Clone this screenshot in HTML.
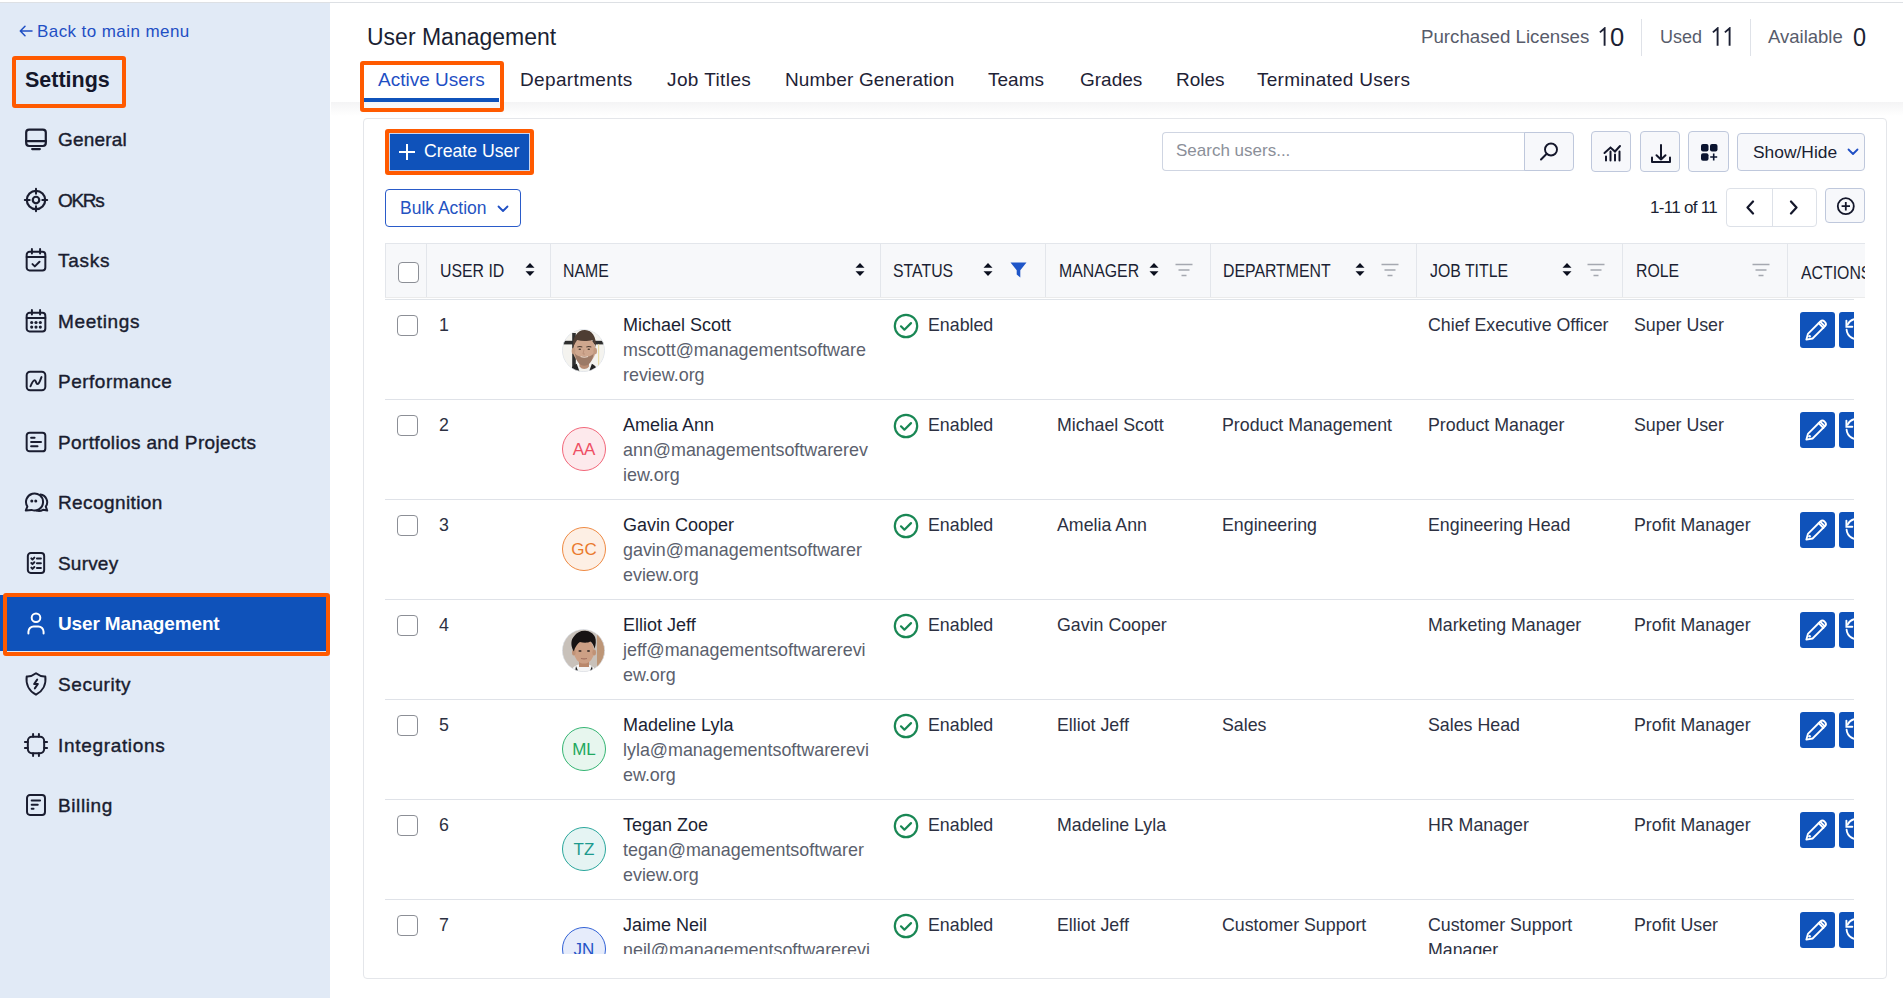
<!DOCTYPE html>
<html><head><meta charset="utf-8">
<style>
*{box-sizing:border-box;margin:0;padding:0}
html,body{width:1903px;height:998px;overflow:hidden;background:#fff;font-family:"Liberation Sans",sans-serif;color:#1b1f33}
.a{position:absolute;white-space:nowrap}
#topline{position:absolute;left:0;top:2px;width:1903px;height:1px;background:#dde0e4}
#side{position:absolute;left:0;top:3px;width:330px;height:995px;background:#e1eaf6}
.back{left:18px;top:20.5px;font-size:17px;color:#1f4fc4;letter-spacing:0.42px}
.back .arr{position:relative;top:2px;margin-right:3px}
.settings{left:25px;top:68px;font-size:21.5px;font-weight:700;color:#14172b}
.obox{position:absolute;border:4px solid #ff5a00;border-radius:3px}
.nav{position:absolute;left:0;width:326px;height:40px;color:#1a1d30}
.nav svg{position:absolute;left:22px;top:6px;fill:none;stroke:currentColor;stroke-width:1.7;stroke-linecap:round;stroke-linejoin:round}
.nav span{position:absolute;left:58px;top:10px;font-size:19px;-webkit-text-stroke:0.4px currentColor;white-space:nowrap}
.nav.sel{background:#0f52ba;color:#fff;height:56px;margin-top:-8px}
.nav.sel svg{top:14px}
.nav.sel span{font-weight:700;-webkit-text-stroke:0;top:18px}
.title{left:367px;top:24px;font-size:23px;color:#1b1f33}
.tab{top:69px;font-size:19px;color:#1e2236}
.lic{top:26px;font-size:18px;color:#585c6b}
.licn{top:23px;font-size:25.5px;color:#1b1f33}
.vdiv{position:absolute;width:1px;background:#dfe2e8}
#hshadow{position:absolute;left:331px;top:102px;width:1572px;height:14px;background:linear-gradient(#f4f4f5,#fff)}
#card{position:absolute;left:363px;top:118px;width:1524px;height:861px;border:1px solid #e4e6ea;border-radius:4px;background:#fff}
.ico{position:absolute}
.btnp{position:absolute;background:#0f52ba;color:#fff;border:1px solid #c9d6ef}
.btnp span,.btno span,.inp span,.gbtn span{position:absolute;white-space:nowrap;font-size:18px}
.btno{position:absolute;border:1px solid #2a5bc9;border-radius:4px;background:#fff;color:#2553c2}
.btno span{font-size:17.5px}
.inp{position:absolute;border:1px solid #cfd5e2;border-right:none;border-radius:4px 0 0 4px;background:#fff;color:#8b8f99}
.inp span{font-size:17px}
.gbtn{position:absolute;background:#f7f8fb;border:1px solid #bfc8dc;border-radius:4px}
.gbtn span{font-size:17.4px}
.wbtn{position:absolute;background:#fff;border:1px solid #dde1e8;border-radius:4px}
.pgtxt{font-size:17px;letter-spacing:-0.7px;color:#1b1f33}
#thead{position:absolute;left:385px;top:243px;width:1480px;height:55px;background:#f7f8fa;border-top:1px solid #e3e6eb;border-left:1px solid #e3e6eb;border-bottom:1px solid #ebebeb}
.hdiv{position:absolute;top:244px;width:1px;height:53px;background:#e3e6eb}
.cb{position:absolute;width:21px;height:21px;border:1.3px solid #8c8f96;border-radius:4px;background:#fff}
.th{top:261px;font-size:18px;transform:scaleX(0.88);transform-origin:0 0;color:#1b1f33}
#actclip{position:absolute;left:1787px;top:244px;width:78px;height:53px;overflow:hidden}
#tbody{position:absolute;left:385px;top:243px;width:1469px;height:711px;overflow:hidden}
.rline{position:absolute;left:0;width:1469px;height:1px;background:#dfe2e8}
.td{font-size:17.8px;color:#2d3142;line-height:25px}
.nm{color:#1b1f33;font-size:18px}
.em{color:#5b5f6d;line-height:25px;font-size:17.9px}
.av{position:absolute;width:43px;height:43px;border-radius:50%;border:1px solid;font-size:17px;text-align:center;line-height:41px;overflow:hidden}
.ebtn{position:absolute;width:35px;height:36px;background:#0f52ba;border-radius:3px}

</style></head>
<body>
<div id="side"></div>
<div class="a back"><svg class="arr" width="16" height="16" viewBox="0 0 16 16"><path d="M14 8H2.5M7 3.2L2.3 8L7 12.8" fill="none" stroke="#1f4fc4" stroke-width="1.5" stroke-linecap="round" stroke-linejoin="round"/></svg>Back to main menu</div>
<div class="a settings">Settings</div>
<div class="obox" style="left:12px;top:56px;width:114px;height:52px"></div>
<div class="nav" style="top:119.0px"><svg width="28" height="28" viewBox="0 0 24 24"><rect x="3.6" y="4" width="16.8" height="14" rx="2.5" stroke-width="1.9"/><path d="M3.6 13.8h16.8M8.7 20.6h6.6" stroke-width="1.9"/></svg><span style="letter-spacing:0.17px">General</span></div>
<div class="nav" style="top:179.6px"><svg width="28" height="28" viewBox="0 0 24 24"><circle cx="12" cy="12" r="7.9" stroke-width="1.9"/><circle cx="12" cy="12" r="2.8" stroke-width="1.9"/><path d="M12 2.4v4.2M12 17.4v4.2M2.4 12h4.2M17.4 12h4.2"/></svg><span style="letter-spacing:-1.3px">OKRs</span></div>
<div class="nav" style="top:240.1px"><svg width="28" height="28" viewBox="0 0 24 24"><rect x="4" y="5" width="16" height="16" rx="2.5"/><path d="M8.5 2.5v4M15.5 2.5v4M4 9.5h16M9 15.5l2 2l4-4"/></svg><span style="letter-spacing:0.75px">Tasks</span></div>
<div class="nav" style="top:300.6px"><svg width="28" height="28" viewBox="0 0 24 24"><rect x="4" y="5" width="16" height="16" rx="2.5"/><path d="M8.5 2.5v4M15.5 2.5v4M4 9.5h16"/><g fill="currentColor" stroke="none"><circle cx="8.3" cy="13.3" r="1.35"/><circle cx="12" cy="13.3" r="1.35"/><circle cx="15.7" cy="13.3" r="1.35"/><circle cx="8.3" cy="17.2" r="1.35"/><circle cx="12" cy="17.2" r="1.35"/><circle cx="15.7" cy="17.2" r="1.35"/></g></svg><span style="letter-spacing:0.63px">Meetings</span></div>
<div class="nav" style="top:361.2px"><svg width="28" height="28" viewBox="0 0 24 24"><rect x="4" y="4" width="16" height="16" rx="3"/><path d="M7.3 16.5c1-2.5 2.2-5.3 3.6-5.2c1.3.1 1 3.3 2.4 3.3c1.5 0 2.5-4 3.4-6"/></svg><span style="letter-spacing:0.5px">Performance</span></div>
<div class="nav" style="top:421.8px"><svg width="28" height="28" viewBox="0 0 24 24"><rect x="4" y="4" width="16" height="16" rx="2.5"/><path d="M7.8 8.3h3M7.8 12h8.5M7.8 15.7h5.5"/></svg><span style="letter-spacing:0.36px">Portfolios and Projects</span></div>
<div class="nav" style="top:482.3px"><svg width="28" height="28" viewBox="0 0 24 24"><path d="M3.2 19.3l1.4-3.4a7.3 7.3 0 1 1 3.6 2.9z"/><path d="M15.8 5.6a6.6 6.6 0 0 1 4.6 10.3l1.2 3.4l-3.6-.6a6.6 6.6 0 0 1-5.4 .7"/><g fill="currentColor" stroke="none"><circle cx="8.4" cy="11.2" r="1.3"/><circle cx="11.8" cy="11.2" r="1.3"/></g></svg><span style="letter-spacing:0.4px">Recognition</span></div>
<div class="nav" style="top:542.8px"><svg width="28" height="28" viewBox="0 0 24 24"><rect x="5" y="3.5" width="14" height="17" rx="2.5"/><path d="M8 8l1 1l1.6-1.6M8 12l1 1l1.6-1.6M8 16l1 1l1.6-1.6M12.8 8.2h3.4M12.8 12.2h3.4M12.8 16.2h3.4"/></svg><span style="letter-spacing:0.2px">Survey</span></div>
<div class="nav sel" style="top:603.4px"><svg width="28" height="28" viewBox="0 0 24 24"><circle cx="12" cy="7.5" r="3.7"/><path d="M5.5 21v-1.5a4.5 4.5 0 0 1 4.5-4.5h4a4.5 4.5 0 0 1 4.5 4.5V21"/></svg><span style="letter-spacing:-0.14px">User Management</span></div>
<div class="nav" style="top:663.9px"><svg width="28" height="28" viewBox="0 0 24 24"><path d="M12 2.8c2.6 2 5.4 3 8 2.8c.9 6.7-2.3 12.5-8 15.6C6.3 18.1 3.1 12.3 4 5.6c2.6.2 5.4-.8 8-2.8z"/><path d="M13 8.2l-2.6 3.8h3.2l-2.6 3.8"/></svg><span style="letter-spacing:0.57px">Security</span></div>
<div class="nav" style="top:724.5px"><svg width="28" height="28" viewBox="0 0 24 24"><rect x="5" y="5" width="14" height="14" rx="3.5"/><path d="M2.5 9.5h2.5M2.5 14.5h2.5M19 9.5h2.5M19 14.5h2.5M9.5 2.5v2.5M14.5 2.5v2.5M9.5 19v2.5M14.5 19v2.5"/></svg><span style="letter-spacing:0.68px">Integrations</span></div>
<div class="nav" style="top:785.0px"><svg width="28" height="28" viewBox="0 0 24 24"><rect x="4.3" y="3.5" width="15.4" height="17" rx="2.5"/><path d="M8.3 8.2h7.2M8.3 11.8h5.2M8.3 15.3h1.6"/></svg><span style="letter-spacing:0.6px">Billing</span></div>
<div class="obox" style="left:3px;top:593px;width:327px;height:63px"></div>
<div id="topline"></div>
<div class="a title">User Management</div>
<div class="a tab" style="left:378px;letter-spacing:0px;color:#1f4fc4">Active Users</div>
<div class="a tab" style="left:520px;letter-spacing:0.35px">Departments</div>
<div class="a tab" style="left:667px;letter-spacing:0.4px">Job Titles</div>
<div class="a tab" style="left:785px;letter-spacing:0.15px">Number Generation</div>
<div class="a tab" style="left:988px;letter-spacing:0px">Teams</div>
<div class="a tab" style="left:1080px;letter-spacing:0px">Grades</div>
<div class="a tab" style="left:1176px;letter-spacing:0px">Roles</div>
<div class="a tab" style="left:1257px;letter-spacing:0.27px">Terminated Users</div>
<div id="hshadow"></div>
<div style="position:absolute;left:364px;top:98px;width:135px;height:4px;background:#0f52ba"></div>
<div class="obox" style="left:360px;top:61px;width:144px;height:51px"></div>
<div class="a lic" style="left:1421px;font-size:18.7px">Purchased Licenses</div>
<svg class="ico" style="left:1599px;top:27px" width="9" height="20" viewBox="0 0 9 20"><path d="M0.9 5.4L5.6 1.3V18.7" stroke="#1b1f33" stroke-width="1.9" fill="none"/></svg>
<div class="a licn" style="left:1610px;font-size:25.5px">0</div>
<div class="vdiv" style="left:1641px;top:19px;height:37px"></div>
<div class="a lic" style="left:1660px;top:27px">Used</div>
<svg class="ico" style="left:1711.5px;top:27px" width="9" height="20" viewBox="0 0 9 20"><path d="M0.9 5.4L5.6 1.3V18.7" stroke="#1b1f33" stroke-width="1.9" fill="none"/></svg><svg class="ico" style="left:1723.5px;top:27px" width="9" height="20" viewBox="0 0 9 20"><path d="M0.9 5.4L5.6 1.3V18.7" stroke="#1b1f33" stroke-width="1.9" fill="none"/></svg>
<div class="vdiv" style="left:1750px;top:19px;height:37px"></div>
<div class="a lic" style="left:1768px;font-size:18.5px;top:25.5px">Available</div>
<div class="a licn" style="left:1853px;transform:scaleX(0.92);transform-origin:0 0">0</div>
<div id="card"></div>
<div class="btnp" style="left:389px;top:133px;width:141px;height:38px"><svg class="ico" style="left:7px;top:8px" width="20" height="20" viewBox="0 0 20 20"><path d="M10 2v16M2 10h16" stroke="#fff" stroke-width="2" fill="none"/></svg><span style="left:34px;top:7px;font-size:17.7px">Create User</span></div>
<div class="obox" style="left:385px;top:129px;width:149px;height:46px"></div>
<div class="btno" style="left:385px;top:189px;width:136px;height:38px"><span style="left:14px;top:8px">Bulk Action</span><svg class="ico" style="left:110px;top:13px" width="14" height="12" viewBox="0 0 14 12"><path d="M2.5 3.5l4.5 4.5l4.5-4.5" stroke="#1f4fc4" stroke-width="1.8" fill="none" stroke-linecap="round" stroke-linejoin="round"/></svg></div>
<div class="inp" style="left:1162px;top:132px;width:363px;height:39px"><span style="left:13px;top:8px">Search users...</span></div>
<div class="gbtn" style="left:1524px;top:132px;width:50px;height:39px;border-radius:0 4px 4px 0"><svg class="ico" style="left:12px;top:7px" width="24" height="24" viewBox="0 0 24 24"><circle cx="14" cy="9.5" r="6" stroke="#14172b" stroke-width="1.9" fill="none"/><path d="M9.7 13.8L4 19.5" stroke="#14172b" stroke-width="2" stroke-linecap="round"/></svg></div>
<div class="gbtn" style="left:1591px;top:131px;width:40px;height:41px"><svg class="ico" style="left:0;top:0" width="40" height="41" viewBox="0 0 40 41"><g stroke="#14172b" stroke-width="2" stroke-linecap="round" fill="none"><path d="M14 28.5v-4M18.5 28.5v-9M23 28.5v-6M27.5 28.5v-9"/><path d="M12.5 21l6-5.5l4.5 4l5-5.5"/></g></svg></div>
<div class="gbtn" style="left:1640px;top:131px;width:40px;height:41px"><svg class="ico" style="left:0;top:0" width="40" height="41" viewBox="0 0 40 41"><g stroke="#14172b" stroke-width="2" stroke-linecap="round" stroke-linejoin="round" fill="none"><path d="M20 13v14.5M15.5 23.2L20 27.5l4.5-4.3M11 25.5v4.5h18v-4.5"/></g></svg></div>
<div class="gbtn" style="left:1688px;top:131px;width:41px;height:41px"><svg class="ico" style="left:-1px;top:-1px" width="41" height="41" viewBox="0 0 41 41"><g fill="#0b1430"><rect x="13" y="13" width="7.5" height="7.5" rx="2"/><rect x="22" y="13" width="7.5" height="7.5" rx="2"/><rect x="13" y="22.3" width="7.5" height="7.5" rx="2"/></g><path d="M25.7 22.5v7M22.2 26h7" stroke="#0b1430" stroke-width="1.6"/></svg></div>
<div class="gbtn" style="left:1737px;top:133px;width:128px;height:38px"><span style="left:15px;top:7.5px;color:#1b1f33">Show/Hide</span><svg class="ico" style="left:108px;top:12px" width="14" height="12" viewBox="0 0 14 12"><path d="M2.5 3.5l4.5 4.5l4.5-4.5" stroke="#1f4fc4" stroke-width="1.8" fill="none" stroke-linecap="round" stroke-linejoin="round"/></svg></div>
<div class="a pgtxt" style="left:1650px;top:198px">1-11 of 11</div>
<div class="wbtn" style="left:1726px;top:188px;width:91px;height:39px"><div style="position:absolute;left:45px;top:0;width:1px;height:37px;background:#dde1e8"></div><svg class="ico" style="left:0;top:0" width="91" height="39" viewBox="0 0 91 39"><g stroke="#14172b" stroke-width="2.2" stroke-linecap="round" stroke-linejoin="round" fill="none"><path d="M26 12.5l-5.5 6l5.5 6M64 12.5l5.5 6l-5.5 6"/></g></svg></div>
<div class="gbtn" style="left:1825px;top:188px;width:40px;height:35px"><svg class="ico" style="left:0;top:0" width="40" height="35" viewBox="0 0 40 35"><circle cx="19.8" cy="17.2" r="8" stroke="#14172b" stroke-width="1.8" fill="none"/><path d="M19.8 13v8.4M15.6 17.2h8.4" stroke="#14172b" stroke-width="1.8"/></svg></div>
<div id="thead"></div>
<div style="position:absolute;left:385px;top:299px;width:1469px;height:1px;background:#e0e4e9"></div>
<div class="hdiv" style="left:426px"></div>
<div class="hdiv" style="left:550px"></div>
<div class="hdiv" style="left:880px"></div>
<div class="hdiv" style="left:1045px"></div>
<div class="hdiv" style="left:1210px"></div>
<div class="hdiv" style="left:1416px"></div>
<div class="hdiv" style="left:1622px"></div>
<div class="hdiv" style="left:1787px"></div>
<div class="cb" style="left:398px;top:262px"></div>
<div class="a th" style="left:440px">USER ID</div>
<div class="a th" style="left:563px">NAME</div>
<div class="a th" style="left:893px">STATUS</div>
<div class="a th" style="left:1059px">MANAGER</div>
<div class="a th" style="left:1223px">DEPARTMENT</div>
<div class="a th" style="left:1430px">JOB TITLE</div>
<div class="a th" style="left:1636px">ROLE</div>
<div id="actclip"><div class="a th" style="left:14px;top:19px">ACTIONS</div></div>
<svg class="ico" style="left:524.5px;top:262px" width="10" height="15" viewBox="0 0 10 15"><path d="M5 1L9.5 5.8H0.5z M5 14L0.5 9.2H9.5z" fill="#0b0f1e"/></svg>
<svg class="ico" style="left:854.5px;top:262px" width="10" height="15" viewBox="0 0 10 15"><path d="M5 1L9.5 5.8H0.5z M5 14L0.5 9.2H9.5z" fill="#0b0f1e"/></svg>
<svg class="ico" style="left:983px;top:262px" width="10" height="15" viewBox="0 0 10 15"><path d="M5 1L9.5 5.8H0.5z M5 14L0.5 9.2H9.5z" fill="#0b0f1e"/></svg>
<svg class="ico" style="left:1148.5px;top:262px" width="10" height="15" viewBox="0 0 10 15"><path d="M5 1L9.5 5.8H0.5z M5 14L0.5 9.2H9.5z" fill="#0b0f1e"/></svg>
<svg class="ico" style="left:1355px;top:262px" width="10" height="15" viewBox="0 0 10 15"><path d="M5 1L9.5 5.8H0.5z M5 14L0.5 9.2H9.5z" fill="#0b0f1e"/></svg>
<svg class="ico" style="left:1562px;top:262px" width="10" height="15" viewBox="0 0 10 15"><path d="M5 1L9.5 5.8H0.5z M5 14L0.5 9.2H9.5z" fill="#0b0f1e"/></svg>
<svg class="ico" style="left:1010px;top:262px" width="17" height="16" viewBox="0 0 17 16"><path d="M0.5 0.5h16L10.3 8.3V15.5L6.7 12.5V8.3z" fill="#1f56c8"/></svg>
<svg class="ico" style="left:1175px;top:263px" width="18" height="14" viewBox="0 0 18 14"><path d="M0.5 1.5h17M3.5 7h11M6.5 12.5h5" stroke="#a5a8b0" stroke-width="1.6"/></svg>
<svg class="ico" style="left:1381px;top:263px" width="18" height="14" viewBox="0 0 18 14"><path d="M0.5 1.5h17M3.5 7h11M6.5 12.5h5" stroke="#a5a8b0" stroke-width="1.6"/></svg>
<svg class="ico" style="left:1587px;top:263px" width="18" height="14" viewBox="0 0 18 14"><path d="M0.5 1.5h17M3.5 7h11M6.5 12.5h5" stroke="#a5a8b0" stroke-width="1.6"/></svg>
<svg class="ico" style="left:1752px;top:263px" width="18" height="14" viewBox="0 0 18 14"><path d="M0.5 1.5h17M3.5 7h11M6.5 12.5h5" stroke="#a5a8b0" stroke-width="1.6"/></svg>
<div id="tbody">
<div class="cb" style="left:12px;top:72px"></div>
<div class="a td" style="left:54px;top:70px">1</div>
<div class="av" style="left:177px;top:86px;border:none"><svg width="43" height="43" viewBox="0 0 43 43"><defs><clipPath id="c1"><circle cx="21.5" cy="21.5" r="21.3"/></clipPath></defs><g clip-path="url(#c1)"><rect width="43" height="43" fill="#f4f3ef"/><rect x="0" y="11.8" width="43" height="3.6" fill="#2e2e2e"/><rect x="10.2" y="4" width="3.6" height="39" fill="#2e2e2e"/><rect x="36" y="15.4" width="1.2" height="28" fill="#e9dca6"/><path d="M12 43c1.5-5 4.5-7.5 10-7.5s8.8 2.5 10 7.5z" fill="#f2f2ef"/><path d="M8.5 43c.8-4.5 2.8-7 6.2-8.2l3 8.2zM35.5 43c-.7-4.5-2.6-7-5.6-8.2l-3 8.2z" fill="#242424"/><path d="M17.5 31h9.5v6.5c-1.5 1.8-3 2.5-4.8 2.5s-3.3-.8-4.7-2.5z" fill="#b98d74"/><ellipse cx="22.3" cy="21.2" rx="11.3" ry="13" fill="#cfa78e"/><ellipse cx="11.5" cy="22" rx="1.8" ry="3.2" fill="#c39a80"/><ellipse cx="33.2" cy="22" rx="1.8" ry="3.2" fill="#c39a80"/><path d="M11 19.5c-1.2-11 4.6-18.5 11.5-18.5c7.2 0 12.2 6 11.4 17.5c-.9-3.6-2.2-6.2-3.8-7.6c-3.8 1.3-10 1.4-14.8.2c-1.8 1.6-3.2 4.4-4.3 8.4z" fill="#4e3d33"/><path d="M12.8 24c1.2 8.3 4.8 12.8 9.5 12.8s8.3-4.5 9.5-12.8c-1.6 2.6-3.6 3.6-9.5 3.6s-7.9-1-9.5-3.6z" fill="#9c7a66"/><path d="M18.6 27.6q3.7 1.4 7.4 0" stroke="#e9d6c8" stroke-width="1.1" fill="none"/><g fill="#4a3a30"><path d="M15.3 17.6q2.5-1.2 5 0v.8q-2.5-.8-5 0z"/><path d="M24.3 17.6q2.5-1.2 5 0v.8q-2.5-.8-5 0z"/><ellipse cx="17.8" cy="20.3" rx="1.3" ry="0.8"/><ellipse cx="26.8" cy="20.3" rx="1.3" ry="0.8"/></g><path d="M22 20.5l-1 4.5h2" stroke="#b58c74" stroke-width="0.8" fill="none"/></g><circle cx="21.5" cy="21.5" r="21.2" fill="none" stroke="#dfe3ea" stroke-width="0.9"/></svg></div>
<div class="a td" style="left:238px;top:70px"><span class="nm">Michael Scott</span><br><span class="em">mscott@managementsoftware<br>review.org</span></div>
<div class="ico" style="left:508px;top:70px"><svg width="26" height="26" viewBox="0 0 26 26"><circle cx="13" cy="13" r="11.2" stroke="#198754" stroke-width="2.2" fill="none"/><path d="M8 13.3l3.4 3.4l6.6-6.6" stroke="#198754" stroke-width="2.2" fill="none" stroke-linecap="round" stroke-linejoin="round"/></svg></div>
<div class="a td" style="left:543px;top:70px">Enabled</div>
<div class="a td" style="left:1043px;top:70px">Chief Executive Officer</div>
<div class="a td" style="left:1249px;top:70px">Super User</div>
<div class="ebtn" style="left:1415px;top:69px"><svg width="35" height="36" viewBox="0 0 35 36"><g stroke="#fff" stroke-width="1.8" fill="none" stroke-linejoin="round" stroke-linecap="round"><path d="M6.3 27.7L7.9 21.9L20.3 9.5a2.9 2.9 0 0 1 4.1 0l.6 .6a2.9 2.9 0 0 1 0 4.1L12.6 26.5z"/><path d="M18.6 11.2l4.8 4.8M20.4 9.9l4.3 4.3"/></g><circle cx="9.6" cy="24.2" r="1.3" fill="#fff"/></svg></div>
<div class="ebtn" style="left:1454px;top:69px;width:15px;border-radius:3px 0 0 3px;overflow:hidden"><svg width="35" height="36" viewBox="0 0 35 36" style="position:absolute;left:0;top:0"><g stroke="#fff" stroke-width="1.9" fill="none" stroke-linecap="round"><path d="M7.6 17.8A10 10 0 1 0 8.6 12.6"/><path d="M7.4 8.6v6.2h5.9"/></g></svg></div>
<div class="rline" style="top:156px"></div>
<div class="cb" style="left:12px;top:172px"></div>
<div class="a td" style="left:54px;top:170px">2</div>
<div class="av" style="left:177px;top:184px;width:44px;height:44px;line-height:44px;background:#fde9ec;border-color:#f2677a;color:#ee4d63">AA</div>
<div class="a td" style="left:238px;top:170px"><span class="nm">Amelia Ann</span><br><span class="em">ann@managementsoftwarerev<br>iew.org</span></div>
<div class="ico" style="left:508px;top:170px"><svg width="26" height="26" viewBox="0 0 26 26"><circle cx="13" cy="13" r="11.2" stroke="#198754" stroke-width="2.2" fill="none"/><path d="M8 13.3l3.4 3.4l6.6-6.6" stroke="#198754" stroke-width="2.2" fill="none" stroke-linecap="round" stroke-linejoin="round"/></svg></div>
<div class="a td" style="left:543px;top:170px">Enabled</div>
<div class="a td" style="left:672px;top:170px">Michael Scott</div>
<div class="a td" style="left:837px;top:170px">Product Management</div>
<div class="a td" style="left:1043px;top:170px">Product Manager</div>
<div class="a td" style="left:1249px;top:170px">Super User</div>
<div class="ebtn" style="left:1415px;top:169px"><svg width="35" height="36" viewBox="0 0 35 36"><g stroke="#fff" stroke-width="1.8" fill="none" stroke-linejoin="round" stroke-linecap="round"><path d="M6.3 27.7L7.9 21.9L20.3 9.5a2.9 2.9 0 0 1 4.1 0l.6 .6a2.9 2.9 0 0 1 0 4.1L12.6 26.5z"/><path d="M18.6 11.2l4.8 4.8M20.4 9.9l4.3 4.3"/></g><circle cx="9.6" cy="24.2" r="1.3" fill="#fff"/></svg></div>
<div class="ebtn" style="left:1454px;top:169px;width:15px;border-radius:3px 0 0 3px;overflow:hidden"><svg width="35" height="36" viewBox="0 0 35 36" style="position:absolute;left:0;top:0"><g stroke="#fff" stroke-width="1.9" fill="none" stroke-linecap="round"><path d="M7.6 17.8A10 10 0 1 0 8.6 12.6"/><path d="M7.4 8.6v6.2h5.9"/></g></svg></div>
<div class="rline" style="top:256px"></div>
<div class="cb" style="left:12px;top:272px"></div>
<div class="a td" style="left:54px;top:270px">3</div>
<div class="av" style="left:177px;top:284px;width:44px;height:44px;line-height:44px;background:#fdefe4;border-color:#ef8a43;color:#ea7a2c">GC</div>
<div class="a td" style="left:238px;top:270px"><span class="nm">Gavin Cooper</span><br><span class="em">gavin@managementsoftwarer<br>eview.org</span></div>
<div class="ico" style="left:508px;top:270px"><svg width="26" height="26" viewBox="0 0 26 26"><circle cx="13" cy="13" r="11.2" stroke="#198754" stroke-width="2.2" fill="none"/><path d="M8 13.3l3.4 3.4l6.6-6.6" stroke="#198754" stroke-width="2.2" fill="none" stroke-linecap="round" stroke-linejoin="round"/></svg></div>
<div class="a td" style="left:543px;top:270px">Enabled</div>
<div class="a td" style="left:672px;top:270px">Amelia Ann</div>
<div class="a td" style="left:837px;top:270px">Engineering</div>
<div class="a td" style="left:1043px;top:270px">Engineering Head</div>
<div class="a td" style="left:1249px;top:270px">Profit Manager</div>
<div class="ebtn" style="left:1415px;top:269px"><svg width="35" height="36" viewBox="0 0 35 36"><g stroke="#fff" stroke-width="1.8" fill="none" stroke-linejoin="round" stroke-linecap="round"><path d="M6.3 27.7L7.9 21.9L20.3 9.5a2.9 2.9 0 0 1 4.1 0l.6 .6a2.9 2.9 0 0 1 0 4.1L12.6 26.5z"/><path d="M18.6 11.2l4.8 4.8M20.4 9.9l4.3 4.3"/></g><circle cx="9.6" cy="24.2" r="1.3" fill="#fff"/></svg></div>
<div class="ebtn" style="left:1454px;top:269px;width:15px;border-radius:3px 0 0 3px;overflow:hidden"><svg width="35" height="36" viewBox="0 0 35 36" style="position:absolute;left:0;top:0"><g stroke="#fff" stroke-width="1.9" fill="none" stroke-linecap="round"><path d="M7.6 17.8A10 10 0 1 0 8.6 12.6"/><path d="M7.4 8.6v6.2h5.9"/></g></svg></div>
<div class="rline" style="top:356px"></div>
<div class="cb" style="left:12px;top:372px"></div>
<div class="a td" style="left:54px;top:370px">4</div>
<div class="av" style="left:177px;top:386px;border:none"><svg width="43" height="43" viewBox="0 0 43 43"><defs><clipPath id="c2"><circle cx="21.5" cy="21.5" r="21.3"/></clipPath></defs><g clip-path="url(#c2)"><rect width="43" height="43" fill="#c8c1ba"/><rect x="35" y="0" width="8" height="43" fill="#bd9677"/><path d="M9 43c1-5 5-8 12.5-8S33 38 34 43z" fill="#f5f5f5"/><path d="M13 43l1-6l2.5 6zM31 43l-1-6l-2.5 6z" fill="#222"/><rect x="17" y="29" width="10" height="9" fill="#b9876a"/><ellipse cx="22" cy="22.3" rx="10.2" ry="12.3" fill="#cda085"/><ellipse cx="11.8" cy="23.5" rx="1.8" ry="3" fill="#c09276"/><ellipse cx="32.2" cy="23.5" rx="1.8" ry="3" fill="#c09276"/><path d="M11.8 22.5c-3.5-6-3-12 .5-15.5c2.5-3.5 6.5-5.5 11-5.2c4.5 .3 8.2 2.6 9.8 6.5c1.2 3 .8 7.5-.6 11.5c-.7-3.6-2.3-6.2-4.2-7.2c-2 1.4-6.5 1.6-10.4 .4c-2.5 1.7-4.8 5-6.1 9.5z" fill="#171313"/><g fill="#4a3a33"><ellipse cx="18" cy="22" rx="1.6" ry="0.9"/><ellipse cx="26.5" cy="22" rx="1.6" ry="0.9"/></g><path d="M19 29.5q3 .8 6 0" stroke="#a27060" stroke-width="1.2" fill="none"/></g><circle cx="21.5" cy="21.5" r="21.2" fill="none" stroke="#dfe3ea" stroke-width="0.9"/></svg></div>
<div class="a td" style="left:238px;top:370px"><span class="nm">Elliot Jeff</span><br><span class="em">jeff@managementsoftwarerevi<br>ew.org</span></div>
<div class="ico" style="left:508px;top:370px"><svg width="26" height="26" viewBox="0 0 26 26"><circle cx="13" cy="13" r="11.2" stroke="#198754" stroke-width="2.2" fill="none"/><path d="M8 13.3l3.4 3.4l6.6-6.6" stroke="#198754" stroke-width="2.2" fill="none" stroke-linecap="round" stroke-linejoin="round"/></svg></div>
<div class="a td" style="left:543px;top:370px">Enabled</div>
<div class="a td" style="left:672px;top:370px">Gavin Cooper</div>
<div class="a td" style="left:1043px;top:370px">Marketing Manager</div>
<div class="a td" style="left:1249px;top:370px">Profit Manager</div>
<div class="ebtn" style="left:1415px;top:369px"><svg width="35" height="36" viewBox="0 0 35 36"><g stroke="#fff" stroke-width="1.8" fill="none" stroke-linejoin="round" stroke-linecap="round"><path d="M6.3 27.7L7.9 21.9L20.3 9.5a2.9 2.9 0 0 1 4.1 0l.6 .6a2.9 2.9 0 0 1 0 4.1L12.6 26.5z"/><path d="M18.6 11.2l4.8 4.8M20.4 9.9l4.3 4.3"/></g><circle cx="9.6" cy="24.2" r="1.3" fill="#fff"/></svg></div>
<div class="ebtn" style="left:1454px;top:369px;width:15px;border-radius:3px 0 0 3px;overflow:hidden"><svg width="35" height="36" viewBox="0 0 35 36" style="position:absolute;left:0;top:0"><g stroke="#fff" stroke-width="1.9" fill="none" stroke-linecap="round"><path d="M7.6 17.8A10 10 0 1 0 8.6 12.6"/><path d="M7.4 8.6v6.2h5.9"/></g></svg></div>
<div class="rline" style="top:456px"></div>
<div class="cb" style="left:12px;top:472px"></div>
<div class="a td" style="left:54px;top:470px">5</div>
<div class="av" style="left:177px;top:484px;width:44px;height:44px;line-height:44px;background:#e7f6ee;border-color:#35b573;color:#22a85e">ML</div>
<div class="a td" style="left:238px;top:470px"><span class="nm">Madeline Lyla</span><br><span class="em">lyla@managementsoftwarerevi<br>ew.org</span></div>
<div class="ico" style="left:508px;top:470px"><svg width="26" height="26" viewBox="0 0 26 26"><circle cx="13" cy="13" r="11.2" stroke="#198754" stroke-width="2.2" fill="none"/><path d="M8 13.3l3.4 3.4l6.6-6.6" stroke="#198754" stroke-width="2.2" fill="none" stroke-linecap="round" stroke-linejoin="round"/></svg></div>
<div class="a td" style="left:543px;top:470px">Enabled</div>
<div class="a td" style="left:672px;top:470px">Elliot Jeff</div>
<div class="a td" style="left:837px;top:470px">Sales</div>
<div class="a td" style="left:1043px;top:470px">Sales Head</div>
<div class="a td" style="left:1249px;top:470px">Profit Manager</div>
<div class="ebtn" style="left:1415px;top:469px"><svg width="35" height="36" viewBox="0 0 35 36"><g stroke="#fff" stroke-width="1.8" fill="none" stroke-linejoin="round" stroke-linecap="round"><path d="M6.3 27.7L7.9 21.9L20.3 9.5a2.9 2.9 0 0 1 4.1 0l.6 .6a2.9 2.9 0 0 1 0 4.1L12.6 26.5z"/><path d="M18.6 11.2l4.8 4.8M20.4 9.9l4.3 4.3"/></g><circle cx="9.6" cy="24.2" r="1.3" fill="#fff"/></svg></div>
<div class="ebtn" style="left:1454px;top:469px;width:15px;border-radius:3px 0 0 3px;overflow:hidden"><svg width="35" height="36" viewBox="0 0 35 36" style="position:absolute;left:0;top:0"><g stroke="#fff" stroke-width="1.9" fill="none" stroke-linecap="round"><path d="M7.6 17.8A10 10 0 1 0 8.6 12.6"/><path d="M7.4 8.6v6.2h5.9"/></g></svg></div>
<div class="rline" style="top:556px"></div>
<div class="cb" style="left:12px;top:572px"></div>
<div class="a td" style="left:54px;top:570px">6</div>
<div class="av" style="left:177px;top:584px;width:44px;height:44px;line-height:44px;background:#e5f4f3;border-color:#2aa79c;color:#1d9a8e">TZ</div>
<div class="a td" style="left:238px;top:570px"><span class="nm">Tegan Zoe</span><br><span class="em">tegan@managementsoftwarer<br>eview.org</span></div>
<div class="ico" style="left:508px;top:570px"><svg width="26" height="26" viewBox="0 0 26 26"><circle cx="13" cy="13" r="11.2" stroke="#198754" stroke-width="2.2" fill="none"/><path d="M8 13.3l3.4 3.4l6.6-6.6" stroke="#198754" stroke-width="2.2" fill="none" stroke-linecap="round" stroke-linejoin="round"/></svg></div>
<div class="a td" style="left:543px;top:570px">Enabled</div>
<div class="a td" style="left:672px;top:570px">Madeline Lyla</div>
<div class="a td" style="left:1043px;top:570px">HR Manager</div>
<div class="a td" style="left:1249px;top:570px">Profit Manager</div>
<div class="ebtn" style="left:1415px;top:569px"><svg width="35" height="36" viewBox="0 0 35 36"><g stroke="#fff" stroke-width="1.8" fill="none" stroke-linejoin="round" stroke-linecap="round"><path d="M6.3 27.7L7.9 21.9L20.3 9.5a2.9 2.9 0 0 1 4.1 0l.6 .6a2.9 2.9 0 0 1 0 4.1L12.6 26.5z"/><path d="M18.6 11.2l4.8 4.8M20.4 9.9l4.3 4.3"/></g><circle cx="9.6" cy="24.2" r="1.3" fill="#fff"/></svg></div>
<div class="ebtn" style="left:1454px;top:569px;width:15px;border-radius:3px 0 0 3px;overflow:hidden"><svg width="35" height="36" viewBox="0 0 35 36" style="position:absolute;left:0;top:0"><g stroke="#fff" stroke-width="1.9" fill="none" stroke-linecap="round"><path d="M7.6 17.8A10 10 0 1 0 8.6 12.6"/><path d="M7.4 8.6v6.2h5.9"/></g></svg></div>
<div class="rline" style="top:656px"></div>
<div class="cb" style="left:12px;top:672px"></div>
<div class="a td" style="left:54px;top:670px">7</div>
<div class="av" style="left:177px;top:684px;width:44px;height:44px;line-height:44px;background:#e6ecfb;border-color:#3262d6;color:#2352c6">JN</div>
<div class="a td" style="left:238px;top:670px"><span class="nm">Jaime Neil</span><br><span class="em">neil@managementsoftwarerevi<br>ew.org</span></div>
<div class="ico" style="left:508px;top:670px"><svg width="26" height="26" viewBox="0 0 26 26"><circle cx="13" cy="13" r="11.2" stroke="#198754" stroke-width="2.2" fill="none"/><path d="M8 13.3l3.4 3.4l6.6-6.6" stroke="#198754" stroke-width="2.2" fill="none" stroke-linecap="round" stroke-linejoin="round"/></svg></div>
<div class="a td" style="left:543px;top:670px">Enabled</div>
<div class="a td" style="left:672px;top:670px">Elliot Jeff</div>
<div class="a td" style="left:837px;top:670px">Customer Support</div>
<div class="a td" style="left:1043px;top:670px">Customer Support<br>Manager</div>
<div class="a td" style="left:1249px;top:670px">Profit User</div>
<div class="ebtn" style="left:1415px;top:669px"><svg width="35" height="36" viewBox="0 0 35 36"><g stroke="#fff" stroke-width="1.8" fill="none" stroke-linejoin="round" stroke-linecap="round"><path d="M6.3 27.7L7.9 21.9L20.3 9.5a2.9 2.9 0 0 1 4.1 0l.6 .6a2.9 2.9 0 0 1 0 4.1L12.6 26.5z"/><path d="M18.6 11.2l4.8 4.8M20.4 9.9l4.3 4.3"/></g><circle cx="9.6" cy="24.2" r="1.3" fill="#fff"/></svg></div>
<div class="ebtn" style="left:1454px;top:669px;width:15px;border-radius:3px 0 0 3px;overflow:hidden"><svg width="35" height="36" viewBox="0 0 35 36" style="position:absolute;left:0;top:0"><g stroke="#fff" stroke-width="1.9" fill="none" stroke-linecap="round"><path d="M7.6 17.8A10 10 0 1 0 8.6 12.6"/><path d="M7.4 8.6v6.2h5.9"/></g></svg></div>
</div>
</body></html>
